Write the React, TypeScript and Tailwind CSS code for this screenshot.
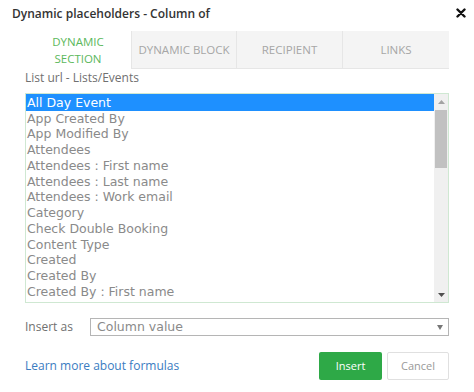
import React from 'react';

const fields = [
  'All Day Event',
  'App Created By',
  'App Modified By',
  'Attendees',
  'Attendees : First name',
  'Attendees : Last name',
  'Attendees : Work email',
  'Category',
  'Check Double Booking',
  'Content Type',
  'Created',
  'Created By',
  'Created By : First name',
];

const tabs = ['DYNAMIC BLOCK', 'RECIPIENT', 'LINKS'];

const App: React.FC = () => {
  return (
    <div className="w-[474px] h-[392px] bg-white font-['Open_Sans',sans-serif] overflow-hidden">
      {/* header */}
      <div className="flex items-center justify-between pl-[12px] pr-[8px] h-[28px]">
        <span className="text-[12px] font-semibold text-[#333]">Dynamic placeholders - Column of</span>
        <svg width="10" height="10" viewBox="0 0 10 10" className="mb-[2px]">
          <path d="M1.5 1.5 L8.5 8.5 M8.5 1.5 L1.5 8.5" stroke="#111" strokeWidth="2.4" strokeLinecap="round" />
        </svg>
      </div>

      <div className="ml-[25px] w-[424px]">
        {/* tabs */}
        <div className="flex h-[38px] mt-[3px]">
          <div className="w-[106px] flex items-center justify-center text-center text-[11.5px] leading-[17px] text-[#5cb85c]">
            DYNAMIC<br />SECTION
          </div>
          {tabs.map((t, i) => (
            <div
              key={t}
              className={`w-[106px] flex items-center justify-center text-[11.5px] text-[#a6a6a6] bg-[#f4f4f4] border-b border-[#e6e6e6] ${i === 0 ? 'border-l' : ''} ${i < 2 ? 'border-r' : ''}`}
            >
              {t}
            </div>
          ))}
        </div>

        <div className="text-[12px] text-[#707070] leading-[16px] mt-[1px]">List url - Lists/Events</div>

        {/* list box */}
        <div className="mt-[7px] h-[210px] border border-[#cfe8d2] flex">
          <div className="flex-1 overflow-hidden font-['DejaVu_Sans',sans-serif] text-[12.5px] leading-[15.75px] text-[#8a8a8a]">
            {fields.map((f, i) => (
              <div key={f} className={`pl-[1px] whitespace-nowrap ${i === 0 ? 'bg-[#1e90ff] text-white h-[16.5px] pt-[0.5px]' : ''}`}>
                {f}
              </div>
            ))}
          </div>
          <div className="w-[14px] bg-[#f0f0f0] flex flex-col items-center">
            <div className="h-[16px] flex items-center justify-center">
              <svg width="7" height="4" viewBox="0 0 7 4"><path d="M0 4 L3.5 0 L7 4 Z" fill="#a3a3a3" /></svg>
            </div>
            <div className="w-[12px] h-[58px] bg-[#c1c1c1]" />
            <div className="flex-1" />
            <div className="h-[14px] flex items-center justify-center">
              <svg width="7" height="4" viewBox="0 0 7 4"><path d="M0 0 L7 0 L3.5 4 Z" fill="#505050" /></svg>
            </div>
          </div>
        </div>

        {/* insert as */}
        <div className="flex items-center mt-[15px]">
          <span className="w-[65px] text-[12px] text-[#707070]">Insert as</span>
          <div className="flex-1 h-[18px] border border-[#b5b5b5] flex items-center justify-between pl-[6px] pr-[5px]">
            <span className="font-['DejaVu_Sans',sans-serif] text-[12.5px] text-[#8a8a8a] leading-none">Column value</span>
            <svg width="6" height="5" viewBox="0 0 6 5"><path d="M0 0 L6 0 L3 5 Z" fill="#777" /></svg>
          </div>
        </div>

        {/* footer */}
        <div className="flex items-center justify-between mt-[16px]">
          <a className="text-[12px] text-[#3a7cc1]">Learn more about formulas</a>
          <div className="flex gap-[5px]">
            <button className="w-[63px] h-[28px] rounded-[2px] bg-[#2ea947] text-white text-[11px]">Insert</button>
            <button className="w-[62px] h-[28px] rounded-[2px] bg-white border border-[#e0e0e0] text-[#999] text-[11px]">Cancel</button>
          </div>
        </div>
      </div>
    </div>
  );
};

export default App;
